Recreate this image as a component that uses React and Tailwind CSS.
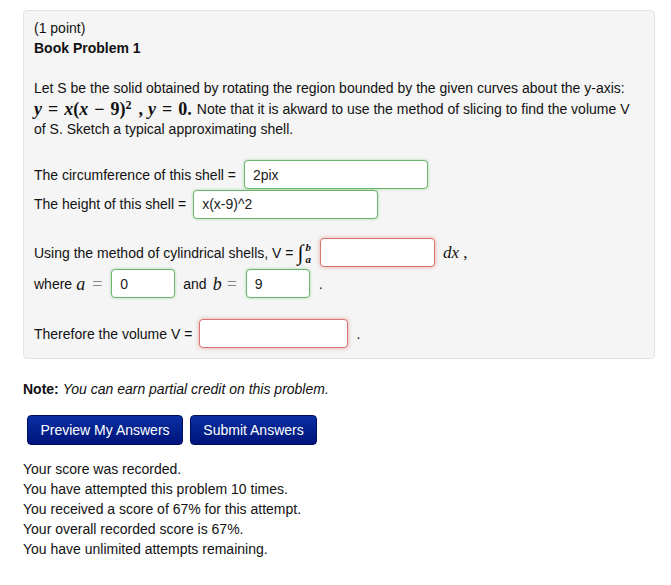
import React from "react";

const okInput =
  "h-[29px] bg-white border border-[#6db56d] rounded-[4px] px-[8px] text-[14px] text-[#222] shadow-[0_0_3px_rgba(92,184,92,0.55)] outline-none";
const badInput =
  "h-[29px] bg-white border border-[#d9736f] rounded-[4px] px-[8px] text-[14px] text-[#222] shadow-[0_0_4px_rgba(217,83,79,0.5)] outline-none";

const Var = ({ children }) => (
  <span className="italic" style={{ fontFamily: '"Liberation Serif", "DejaVu Serif", serif' }}>
    {children}
  </span>
);

const Serif = ({ children, className = "" }) => (
  <span className={className} style={{ fontFamily: '"Liberation Serif", "DejaVu Serif", serif' }}>
    {children}
  </span>
);

const App = () => {
  return (
    <div
      className="min-h-screen bg-white text-[14px] text-[#111] pl-[23px] pr-[16px] pt-[10px] pb-4"
      style={{ fontFamily: '"Liberation Sans", Arial, sans-serif' }}
    >
      <div className="w-[632px] bg-[#f5f5f5] border border-[#e3e3e3] rounded-[4px] pl-[10px] pr-[10px] pt-[7px] pb-[10px] leading-[20px]">
        <div>(1 point)</div>
        <div className="font-bold">Book Problem 1</div>

        <div className="mt-[20px]">
          <div>Let S be the solid obtained by rotating the region bounded by the given curves about the y-axis:</div>
          <div className="h-[21px] flex items-center whitespace-nowrap overflow-visible">
            <Serif className="text-[18px] font-semibold leading-none">
              <Var>y</Var>
              <span className="mx-[6px]">=</span>
              <Var>x</Var>(<Var>x</Var>
              <span className="mx-[6px]">−</span>9)<sup className="text-[12px]">2</sup>
              <span className="ml-[7px] mr-[5px]">,</span>
              <Var>y</Var>
              <span className="mx-[6px]">=</span>0.
            </Serif>
            <span className="ml-[5px]">Note that it is akward to use the method of slicing to find the volume V</span>
          </div>
          <div>of S. Sketch a typical approximating shell.</div>
        </div>

        <div className="mt-[21px] flex items-center h-[29px]">
          <span>The circumference of this shell =</span>
          <input readOnly value="2pix" className={`${okInput} ml-[8px] w-[184px]`} />
        </div>
        <div className="mt-[1px] flex items-center h-[28px]">
          <span>The height of this shell =</span>
          <input readOnly value="x(x-9)^2" className={`${okInput} ml-[7px] w-[185px] h-[28px]`} />
        </div>

        <div className="mt-[20px] flex items-center h-[29px]">
          <span>Using the method of cylindrical shells, V =</span>
          <Serif className="ml-[4px] inline-flex items-center">
            <span className="text-[22px] leading-none">∫</span>
            <span className="inline-flex flex-col italic text-[11px] leading-[12px] ml-[2px] font-semibold">
              <span>b</span>
              <span>a</span>
            </span>
          </Serif>
          <input readOnly value="" className={`${badInput} ml-[9px] w-[115px]`} />
          <Serif className="ml-[8px] text-[17px]">
            <Var>dx</Var> ,
          </Serif>
        </div>
        <div className="mt-[2px] flex items-center h-[29px]">
          <span>where</span>
          <Serif className="ml-[4px] text-[18px]">
            <Var>a</Var>
            <span className="ml-[7px] text-[#888]">=</span>
          </Serif>
          <input readOnly value="0" className={`${okInput} ml-[9px] w-[64px]`} />
          <span className="ml-[8px]">and</span>
          <Serif className="ml-[6px] text-[18px]">
            <Var>b</Var>
            <span className="ml-[5px] text-[#888]">=</span>
          </Serif>
          <input readOnly value="9" className={`${okInput} ml-[9px] w-[64px]`} />
          <span className="ml-[9px]">.</span>
        </div>

        <div className="mt-[21px] flex items-center h-[29px]">
          <span>Therefore the volume V =</span>
          <input readOnly value="" className={`${badInput} ml-[7px] w-[149px]`} />
          <span className="ml-[8px]">.</span>
        </div>
      </div>

      <div className="mt-[20px] leading-[20px]">
        <span className="font-bold">Note:</span> <span className="italic">You can earn partial credit on this problem.</span>
      </div>

      <div className="mt-[16px] flex gap-[7px] pl-[4px]">
        <button className="h-[30px] w-[156px] rounded-[4px] bg-linear-to-b from-[#0b2fa3] to-[#00137a] text-white text-[14px] border border-[#001060]">
          Preview My Answers
        </button>
        <button className="h-[30px] w-[127px] rounded-[4px] bg-linear-to-b from-[#0b2fa3] to-[#00137a] text-white text-[14px] border border-[#001060]">
          Submit Answers
        </button>
      </div>

      <div className="mt-[14px] leading-[20px]">
        <div>Your score was recorded.</div>
        <div>You have attempted this problem 10 times.</div>
        <div>You received a score of 67% for this attempt.</div>
        <div>Your overall recorded score is 67%.</div>
        <div>You have unlimited attempts remaining.</div>
      </div>
    </div>
  );
};

export default App;
